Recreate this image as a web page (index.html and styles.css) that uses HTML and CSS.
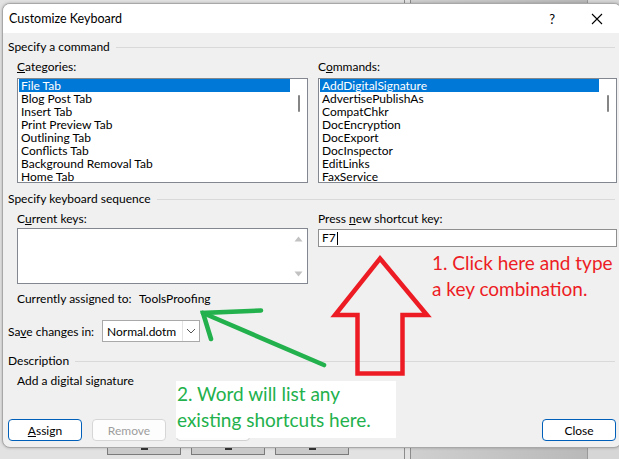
FILE: index.html
```html
<!DOCTYPE html>
<html>
<head>
<meta charset="utf-8">
<link rel="stylesheet" href="styles.css">
</head>
<body>
<div class="dialog">
  <div class="titlebar">
    <span class="title">Customize Keyboard</span>
    <span class="help">?</span>
    <svg class="xicon" width="12" height="12" viewBox="0 0 12 12"><path d="M1 1 L11 11 M11 1 L1 11" stroke="#000" stroke-width="1.1" fill="none"/></svg>
  </div>
  <div class="content">
    <div class="group">Specify a command</div>
    <div class="pair">
      <div class="col">
        <div class="lbl"><u>C</u>ategories:</div>
        <div class="listbox">
          <div class="items">
            <div class="item sel">File Tab</div>
            <div class="item">Blog Post Tab</div>
            <div class="item">Insert Tab</div>
            <div class="item">Print Preview Tab</div>
            <div class="item">Outlining Tab</div>
            <div class="item">Conflicts Tab</div>
            <div class="item">Background Removal Tab</div>
            <div class="item">Home Tab</div>
          </div>
          <div class="vscroll"><div class="thumb"></div></div>
        </div>
      </div>
      <div class="col">
        <div class="lbl">C<u>o</u>mmands:</div>
        <div class="listbox">
          <div class="items">
            <div class="item sel">AddDigitalSignature</div>
            <div class="item">AdvertisePublishAs</div>
            <div class="item">CompatChkr</div>
            <div class="item">DocEncryption</div>
            <div class="item">DocExport</div>
            <div class="item">DocInspector</div>
            <div class="item">EditLinks</div>
            <div class="item">FaxService</div>
          </div>
          <div class="vscroll"><div class="thumb"></div></div>
        </div>
      </div>
    </div>
    <div class="group g2">Specify keyboard sequence</div>
    <div class="pair">
      <div class="col">
        <div class="lbl">C<u>u</u>rrent keys:</div>
        <div class="keysbox">
          <div class="keys"></div>
          <div class="kscroll">
            <svg width="9" height="6" viewBox="0 0 9 6"><path d="M0.5 5.5 L4.5 0.5 L8.5 5.5 Z" fill="#c2c2c2"/></svg>
            <svg width="9" height="6" viewBox="0 0 9 6"><path d="M0.5 0.5 L4.5 5.5 L8.5 0.5 Z" fill="#c2c2c2"/></svg>
          </div>
        </div>
      </div>
      <div class="col">
        <div class="lbl">Press <u>n</u>ew shortcut key:</div>
        <div class="input">F7<span class="caret"></span></div>
      </div>
    </div>
    <div class="assigned"><span class="alabel">Currently assigned to:</span><span>ToolsProofing</span></div>
    <div class="saverow">
      <span class="slabel">Sa<u>v</u>e changes in:</span>
      <div class="combo">
        <span class="cval">Normal.dotm</span>
        <span class="cbtn"><svg width="10" height="6" viewBox="0 0 10 6"><path d="M1 1 L5 5 L9 1" stroke="#555" stroke-width="1" fill="none"/></svg></span>
      </div>
    </div>
    <div class="group g3">Description</div>
    <div class="desc">Add a digital signature</div>
    <div class="buttons">
      <div class="btn primary"><u>A</u>ssign</div>
      <div class="btn disabled">Remove</div>
      <div class="btn"></div>
      <div class="btn primary close">Close</div>
    </div>
  </div>
</div>
<div class="strip">
  <div class="sbtn"><i></i></div>
  <div class="sbtn"><i></i></div>
  <div class="sbtn"><i></i></div>
</div>

<div class="note-red">1. Click here and type<br>a key combination.</div>
<div class="note-green">2. Word will list any<br>existing shortcuts here.</div>
<svg class="overlay" width="619" height="459" viewBox="0 0 619 459">
  <polygon points="380,258.5 427,315 402.5,315 402.5,373.5 357.5,373.5 357.5,315 335,315" fill="none" stroke="#ed1c24" stroke-width="4.5" stroke-linejoin="miter"/>
  <g stroke="#22b14c" stroke-width="4.6" stroke-linecap="round" fill="none">
    <path d="M324 365 L203 313"/>
    <path d="M261 310.5 L203 313 L211 339"/>
  </g>
</svg>
</body>
</html>
```
FILE: styles.css
```css
* { box-sizing: border-box; }
html, body { margin: 0; padding: 0; }
body {
  width: 619px;
  height: 459px;
  overflow: hidden;
  position: relative;
  font-family: "Lato", "Noto Sans", sans-serif;
  font-size: 12px;
  color: #000;
  background:
    linear-gradient(to right, transparent 404px, #8c8c8c 404px, #8c8c8c 405px, transparent 405px, transparent 410px, #8c8c8c 410px, #8c8c8c 411px, transparent 411px, transparent 587px, #9a9a9a 587px, #9a9a9a 588px, transparent 588px),
    linear-gradient(to right, #e2e2e2 0, #e2e2e2 410px, #cfcfcf 411px, #b9b9b9 587px, #d6d6d6 588px);
}
u { text-decoration: underline; text-underline-offset: 1px; }

.dialog {
  margin: 3px 0 0 2px;
  width: 620px;
  height: 445px;
  background: #f0f0f0;
  border: 1px solid #a8a8a8;
  border-radius: 8px;
  overflow: hidden;
  box-shadow: 0 0 3px rgba(0,0,0,0.25);
}
.titlebar {
  height: 29px;
  background: #fff;
  display: flex;
  align-items: center;
  padding-left: 6px;
  font-size: 12.5px;
}
.title { flex: 1; }
.help { font-size: 13px; margin-right: 36px; }
.xicon { margin-right: 18px; }

.content { padding-left: 5px; }
.group {
  display: flex;
  align-items: center;
  gap: 6px;
  height: 16px;
  line-height: 16px;
  margin-top: 6px;
  padding-right: 6px;
}
.group::after {
  content: "";
  flex: 1;
  border-top: 1px solid #d9d9d9;
}
.g2 { margin-top: 8px; }
.g3 { margin-top: 11px; }

.pair {
  display: grid;
  grid-template-columns: 291px 299px;
  column-gap: 10px;
  margin-left: 9px;
}
.lbl { line-height: 16px; height: 16px; margin-top: 4px; }

.listbox {
  margin-top: 3px;
  height: 105px;
  border: 1px solid #828790;
  background: #fff;
  display: flex;
}
.items { flex: 1; padding: 0 0 0 1px; }
.item { height: 13px; line-height: 13px; padding-left: 2px; white-space: nowrap; }
.item.sel { background: #0078d7; color: #fff; }
.vscroll { width: 17px; position: relative; }
.thumb {
  position: absolute;
  left: 8px;
  top: 16px;
  width: 2px;
  height: 17px;
  border-radius: 1px;
  background: #858585;
}

.keysbox {
  margin-top: 1px;
  height: 56px;
  border: 1px solid #828790;
  background: #fff;
  display: flex;
}
.keys { flex: 1; }
.kscroll {
  width: 17px;
  display: flex;
  flex-direction: column;
  justify-content: space-between;
  align-items: center;
  padding: 7px 0 6px;
}
.kscroll svg { display: block; }

.input {
  margin-top: 2px;
  height: 18px;
  border: 1px solid #8f8f8f;
  background: #fff;
  line-height: 16px;
  padding-left: 3px;
  display: flex;
  align-items: center;
}
.caret { display: inline-block; width: 1px; height: 13px; background: #000; margin-left: 1px; }

.assigned {
  margin-top: 7px;
  margin-left: 9px;
  line-height: 16px;
  height: 16px;
  display: flex;
}
.alabel { width: 122px; }

.saverow {
  margin-top: 13px;
  height: 22px;
  display: flex;
  align-items: center;
}
.slabel { width: 94px; }
.combo {
  width: 98px;
  height: 22px;
  border: 1px solid #a9a9a9;
  background: #fff;
  display: flex;
  align-items: center;
}
.cval { flex: 1; padding-left: 4px; }
.cbtn {
  width: 17px;
  height: 20px;
  border-left: 1px solid #e3e3e3;
  display: flex;
  align-items: center;
  justify-content: center;
}
.cbtn svg { display: block; }

.desc { margin-top: 4px; margin-left: 9px; line-height: 16px; height: 16px; }

.buttons {
  margin-top: 30px;
  display: flex;
  gap: 10px;
  padding-right: 5px;
}
.btn {
  width: 74px;
  height: 22px;
  border: 1px solid #d0d0d0;
  border-radius: 4px;
  background: #fdfdfd;
  display: flex;
  align-items: center;
  justify-content: center;
  font-size: 12px;
}
.btn.primary { border: 1.5px solid #005fb8; background: #fff; }
.btn.disabled { color: #9d9d9d; border-color: #d6d6d6; }
.btn.close { margin-left: auto; }

.strip {
  display: flex;
  margin-left: 107px;
  gap: 10px;
}
.sbtn {
  width: 74px;
  height: 7px;
  border: 1px solid #7a7a7a;
  border-top: none;
  background: #c9c9c9;
  display: flex;
  justify-content: center;
}
.sbtn i { display: block; width: 7px; height: 2px; background: #333; }

.note-red {
  position: absolute;
  left: 432px;
  top: 250px;
  font-family: "Lato", "Open Sans", sans-serif;
  font-size: 19px;
  line-height: 26px;
  color: #ed1c24;
  white-space: nowrap;
}
.note-green {
  position: absolute;
  left: 176px;
  top: 381px;
  width: 220px;
  height: 57px;
  background: #fff;
  padding-left: 1px;
  font-family: "Lato", "Open Sans", sans-serif;
  font-size: 19px;
  line-height: 26px;
  color: #22b14c;
  white-space: nowrap;
}
.overlay { position: absolute; left: 0; top: 0; pointer-events: none; }
```
